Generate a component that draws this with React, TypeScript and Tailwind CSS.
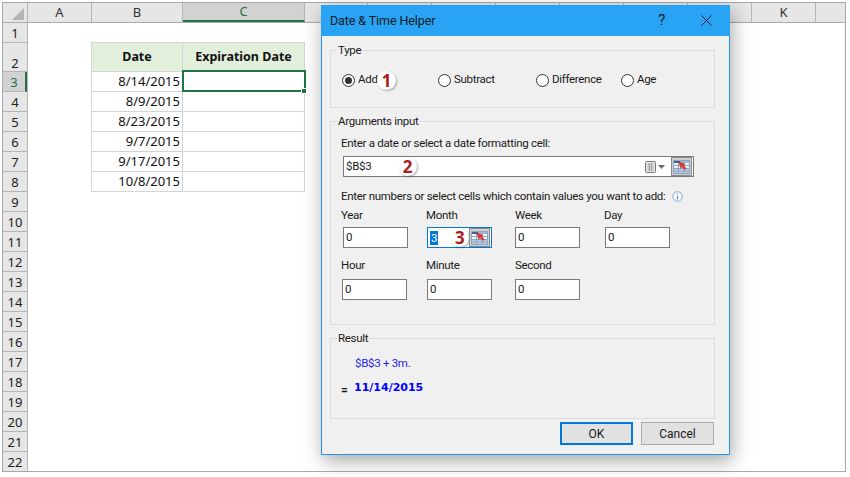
import React from "react";

const ui = { fontFamily: 'Roboto, "Noto Sans", sans-serif' };
const sheetFont = { fontFamily: '"Noto Sans", sans-serif' };

function RangeIcon() {
  return (
    <svg width="17" height="14" viewBox="0 0 17 14" className="block">
      <rect x="0.5" y="0.5" width="16" height="13" fill="#eef3f9" stroke="#8ea4c0" />
      <rect x="1" y="1" width="6" height="2" fill="#44628c" />
      <rect x="7" y="1" width="9" height="2" fill="#9fb6d4" />
      <rect x="1" y="9" width="15" height="4" fill="#b9cce4" />
      <path d="M1 5.5H16M1 8.5H16M1 11H16M5.5 3V13M11 3V13" stroke="#8fa6c4" strokeWidth="1" fill="none" />
      <path d="M6 2L12 4.2L10.4 5.4L13.2 8.2L11.8 9.6L9 6.8L7.8 8.4Z" fill="#e8382d" stroke="#b0231a" strokeWidth="0.5" />
    </svg>
  );
}

function Badge({ n }: { n: number }) {
  return (
    <span
      className="flex h-[19px] w-[19px] shrink-0 items-center justify-center rounded-full bg-white text-[17px] leading-none font-bold text-[#ab1c1c] shadow-[1px_1px_2px_rgba(0,0,0,0.3)]"
      style={{ fontFamily: '"Open Sans", sans-serif' }}
    >
      {n}
    </span>
  );
}

function Radio({ label, on, className }: { label: string; on?: boolean; className: string }) {
  return (
    <span className={`flex items-center ${className}`}>
      <span className="flex h-[13px] w-[13px] shrink-0 items-center justify-center rounded-full border border-[#333] bg-white">
        {on && <span className="h-[7px] w-[7px] rounded-full bg-[#333]" />}
      </span>
      <span className="ml-[3px]">{label}</span>
    </span>
  );
}

function Field({ label, x, w, gap }: { label: string; x: string; w: string; gap: string }) {
  return (
    <div className={w}>
      <div className="h-[16px] leading-[16px]">{label}</div>
      <div className={`flex h-[21px] w-[65px] items-center border border-[#7a7a7a] bg-white pl-[2px] ${gap} ${x}`}>0</div>
    </div>
  );
}

function Group({ title, className, children }: { title: string; className: string; children: React.ReactNode }) {
  return (
    <fieldset className={`ml-[8px] w-[385px] border border-[#dcdcdc] ${className}`}>
      <legend className="ml-[6px] px-[1px] leading-[15px]">{title}</legend>
      {children}
    </fieldset>
  );
}

const cols: [string, string, string][] = [
  ["A", "w-[64px]", ""],
  ["B", "w-[91px]", ""],
  ["C", "w-[122px]", "sel"],
  ["D", "w-[63px]", ""],
  ["E", "w-[64px]", ""],
  ["F", "w-[64px]", ""],
  ["G", "w-[64px]", ""],
  ["H", "w-[64px]", ""],
  ["I", "w-[64px]", ""],
  ["J", "w-[64px]", ""],
  ["K", "w-[64px]", ""],
];

const dates = ["8/14/2015", "8/9/2015", "8/23/2015", "9/7/2015", "9/17/2015", "10/8/2015"];
const rows = Array.from({ length: 22 }, (_, i) => i + 1);

export default function App() {
  return (
    <div className="relative h-[477px] w-[850px] overflow-hidden bg-white" style={ui}>
      {/* Sheet */}
      <div
        className="ml-[2px] mt-[2px] h-[470px] w-[844px] overflow-hidden border border-[#a8a8a8] bg-white text-[13px] text-[#222]"
        style={sheetFont}
      >
        <div className="flex h-[20px] border-b border-[#ababab] bg-[#e6e6e6]">
          <div className="flex w-[25px] shrink-0 items-end justify-end border-r border-[#b5b5b5] pb-[2px] pr-[3px]">
            <svg width="12" height="12" viewBox="0 0 12 12" className="block">
              <path d="M12 0V12H0Z" fill="#b4b4b4" />
            </svg>
          </div>
          {cols.map(([c, w, s]) => (
            <div
              key={c}
              className={`flex shrink-0 items-center justify-center border-r border-[#b5b5b5] leading-none ${w} ${
                s ? "border-b-2 border-b-[#217346] bg-[#d2d2d2] text-[#217346]" : "text-[#333]"
              }`}
            >
              {c}
            </div>
          ))}
        </div>
        <div className="flex">
          <div className="w-[25px] shrink-0 border-r border-[#b5b5b5] bg-[#e6e6e6]">
            {rows.map((r) => (
              <div
                key={r}
                className={`flex items-center justify-center border-b border-[#b5b5b5] pt-px leading-none ${
                  r === 2 ? "h-[29px] items-end pb-[1px]" : "h-[20px]"
                } ${r === 3 ? "border-r-2 border-r-[#217346] bg-[#d2d2d2] text-[#217346]" : ""}`}
              >
                {r}
              </div>
            ))}
          </div>
          <div className="relative ml-[63px] mt-[19px] h-fit">
            <div className="grid w-[214px] grid-cols-[91px_122px] border-l border-t border-[#d4d4d4]">
              <div className="flex h-[29px] items-center justify-center border-b border-r border-[#d4d4d4] bg-[#e2efda] pt-px text-[12.5px] font-bold text-[#111]">
                Date
              </div>
              <div className="flex h-[29px] items-center justify-center whitespace-nowrap border-b border-r border-[#d4d4d4] bg-[#e2efda] pt-px text-[12.5px] font-bold text-[#111]">
                Expiration Date
              </div>
              {dates.map((d) => (
                <React.Fragment key={d}>
                  <div className="flex h-[20px] items-center justify-end border-b border-r border-[#d4d4d4] pr-[2px] pt-px text-[#111]">
                    {d}
                  </div>
                  <div className="h-[20px] border-b border-r border-[#d4d4d4]" />
                </React.Fragment>
              ))}
            </div>
            <div className="absolute left-[91px] top-[28px] h-[22px] w-[124px] border-2 border-[#217346]">
              <div className="absolute -bottom-[4px] -right-[3px] h-[6px] w-[6px] border border-white bg-[#217346]" />
            </div>
          </div>
        </div>
      </div>

      {/* Dialog */}
      <div className="absolute left-[321px] top-[5px] flex h-[450px] w-[409px] flex-col border border-[#1e95e6] bg-[#f0f0f0] text-[11.5px] tracking-[-0.3px] text-[#1a1a1a] shadow-[2px_6px_18px_rgba(0,0,0,0.35)]">
        <div className="-mx-px -mt-px flex h-[31px] shrink-0 items-center bg-[#29a3f3] pl-[9px] text-[#0c1a24]">
          <span className="pt-px text-[12.5px] tracking-[-0.1px]">Date &amp; Time Helper</span>
          <span className="ml-auto text-[15px]">?</span>
          <svg width="11" height="11" viewBox="0 0 11 11" className="ml-[36px] mr-[18px] block">
            <path d="M0.5 0.5L10.5 10.5M10.5 0.5L0.5 10.5" stroke="#0c1a24" strokeWidth="1" fill="none" />
          </svg>
        </div>

        <Group title="Type" className="mt-[7px] h-[65px]">
          <div className="mt-[13px] flex h-[18px] items-center">
            <Radio label="Add" on className="ml-[11px] w-[35px]" />
            <Badge n={1} />
            <Radio label="Subtract" className="ml-[42px] w-[98px]" />
            <Radio label="Difference" className="w-[85px]" />
            <Radio label="Age" className="" />
          </div>
        </Group>

        <Group title="Arguments input" className="mt-[6px] h-[211px]">
          <div className="pl-[10px]">
            <div className="mt-[6px] h-[16px] leading-[16px]">Enter a date or select a date formatting cell:</div>
            <div className="ml-[2px] mt-[5px] flex h-[21px] w-[351px] items-center border border-[#7a7a7a] bg-white pl-[2px]">
              <span className="w-[52px]">$B$3</span>
              <Badge n={2} />
              <svg width="22" height="12" viewBox="0 0 22 12" className="ml-auto block">
                <rect x="0.5" y="0.5" width="10" height="11" rx="1" fill="#e6e6e6" stroke="#777" />
                <path d="M2.5 3H8.5M2.5 5H8.5M2.5 7H8.5M2.5 9H8.5M4.5 2V10M6.5 2V10" stroke="#aaa" strokeWidth="1" fill="none" />
                <path d="M13 4H20L16.5 8Z" fill="#5a6b82" />
              </svg>
              <span className="ml-[4px] mr-px flex h-[19px] w-[21px] items-center justify-center border border-[#8a8a8a] bg-[#d0d0d0]">
                <RangeIcon />
              </span>
            </div>
            <div className="mt-[11px] flex h-[16px] items-center whitespace-nowrap leading-[16px]">
              Enter numbers or select cells which contain values you want to add:
              <svg width="11" height="11" viewBox="0 0 11 11" className="ml-[6px] block">
                <circle cx="5.5" cy="5.5" r="4.8" fill="#f4f8fd" stroke="#86a9dc" />
                <path d="M5.5 2.5V3.6M5.5 4.8V8.4" stroke="#4d7cc4" strokeWidth="1" fill="none" />
              </svg>
            </div>
            <div className="mt-[3px] flex">
              <Field label="Year" x="ml-[2px]" w="w-[85px]" gap="mt-[4px]" />
              <div className="w-[89px]">
                <div className="h-[16px] leading-[16px]">Month</div>
                <div className="ml-px mt-[4px] flex h-[21px] w-[65px] items-center border border-[#0078d7] bg-white pl-[2px]">
                  <span className="bg-[#0078d7] px-px leading-[14px] text-white">3</span>
                  <span className="ml-[12px]"><Badge n={3} /></span>
                  <span className="flex h-[19px] w-[21px] shrink-0 items-center justify-center border border-[#8a8a8a] bg-[#d0d0d0]">
                    <RangeIcon />
                  </span>
                </div>
              </div>
              <Field label="Week" x="" w="w-[89px]" gap="mt-[4px]" />
              <Field label="Day" x="ml-px" w="w-[70px]" gap="mt-[4px]" />
            </div>
            <div className="mt-[9px] flex">
              <Field label="Hour" x="ml-px" w="w-[85px]" gap="mt-[6px]" />
              <Field label="Minute" x="ml-px" w="w-[89px]" gap="mt-[6px]" />
              <Field label="Second" x="" w="w-[70px]" gap="mt-[6px]" />
            </div>
          </div>
        </Group>

        <Group title="Result" className="mt-[6px] h-[88px]">
          <div className="pl-[10px]">
            <div className="ml-[14px] mt-[9px] h-[16px] leading-[16px] text-[#2626e6]">$B$3 + 3m.</div>
            <div className="mt-[9px] flex h-[16px] items-center">
              <span className="w-[13px] pt-[3px] text-[12px] font-bold">=</span>
              <span
                className="text-[11px] font-bold tracking-normal text-[#0000ff]"
                style={{ fontFamily: '"DejaVu Sans", sans-serif' }}
              >
                11/14/2015
              </span>
            </div>
          </div>
        </Group>

        <div className="ml-[238px] mt-[3px] flex gap-[8px] text-[12px] tracking-normal">
          <button className="h-[23px] w-[73px] border-2 border-[#0078d7] bg-[#e1e1e1] text-[#1a1a1a]">OK</button>
          <button className="h-[23px] w-[73px] border border-[#adadad] bg-[#e1e1e1] text-[#1a1a1a]">Cancel</button>
        </div>
      </div>
    </div>
  );
}
